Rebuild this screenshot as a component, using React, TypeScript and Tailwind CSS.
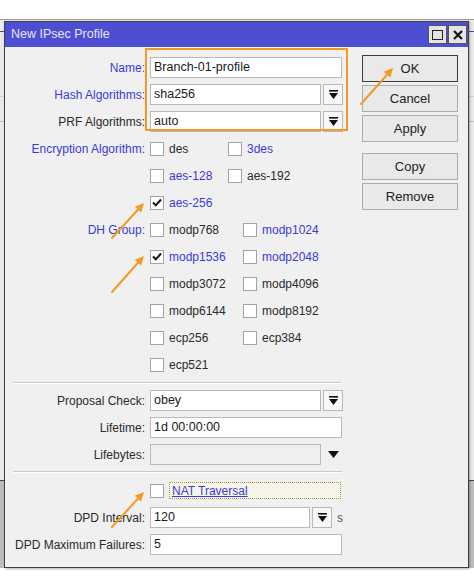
import React from "react";

const BLUE = "text-[#3a3ad8]";
const DARK = "text-[#2a2a2a]";

const DropBtn = () => (
  <div className="w-[20px] h-[21px] shrink-0 border border-[#b9b9b9] bg-[#f7f7f7] flex items-center justify-center">
    <svg width="9" height="10" viewBox="0 0 9 10">
      <rect x="0" y="0" width="9" height="1.6" fill="#111" />
      <polygon points="0,3 9,3 4.5,9" fill="#111" />
    </svg>
  </div>
);

const Field = ({ value = "", w = "w-[192px]", disabled = false }: { value?: string; w?: string; disabled?: boolean }) => (
  <div
    className={`${w} h-[21px] shrink-0 border border-[#b9b9b9] ${disabled ? "bg-[#efefef]" : "bg-white"} px-[3px] flex items-center text-[12.5px] text-[#1a1a1a]`}
  >
    {value}
  </div>
);

const Box = ({ checked = false }: { checked?: boolean }) => (
  <div className="w-[14px] h-[14px] shrink-0 border border-[#a3a3a3] bg-white flex items-center justify-center">
    {checked && (
      <svg width="10" height="9" viewBox="0 0 10 9">
        <path d="M1 4.5 L3.8 7.3 L9 1.5" stroke="#111" strokeWidth="2" fill="none" />
      </svg>
    )}
  </div>
);

const Check = ({ label, checked = false, blue = false, w }: { label: string; checked?: boolean; blue?: boolean; w: string }) => (
  <div className={`${w} flex items-center gap-[5px]`}>
    <Box checked={checked} />
    <span className={blue ? BLUE : DARK}>{label}</span>
  </div>
);

const Row = ({ label = "", blue = false, children }: { label?: string; blue?: boolean; children?: React.ReactNode }) => (
  <div className="h-[27px] flex items-center">
    <div className={`w-[141px] shrink-0 text-right pr-[1px] ${blue ? BLUE : DARK}`}>{label ? `${label}:` : ""}</div>
    <div className="ml-[4px] flex items-center gap-[2px]">{children}</div>
  </div>
);

const Sep = ({ cls }: { cls: string }) => (
  <div className={`${cls} ml-[8px] w-[329px] h-[2px] border-t border-[#cacaca] border-b border-b-white`} />
);

const Button = ({ label, primary = false }: { label: string; primary?: boolean }) => (
  <div
    className={`w-[96px] h-[27px] flex items-center justify-center bg-[#e9e9e9] text-[13px] text-[#222] border ${
      primary ? "border-[#3c3c3c]" : "border-[#adadad]"
    }`}
  >
    {label}
  </div>
);

const Arrow = ({ x1, y1, x2, y2 }: { x1: number; y1: number; x2: number; y2: number }) => {
  const a = Math.atan2(y2 - y1, x2 - x1);
  const l = 10;
  const p1 = [x2 - l * Math.cos(a - 0.45), y2 - l * Math.sin(a - 0.45)];
  const p2 = [x2 - l * Math.cos(a + 0.45), y2 - l * Math.sin(a + 0.45)];
  return (
    <g>
      <line x1={x1} y1={y1} x2={x2 - 4 * Math.cos(a)} y2={y2 - 4 * Math.sin(a)} stroke="#f29a22" strokeWidth="2" strokeLinecap="round" />
      <polygon points={`${x2},${y2} ${p1[0]},${p1[1]} ${p2[0]},${p2[1]}`} fill="#f29a22" />
    </g>
  );
};

export default function App() {
  return (
    <div
      className="relative w-[474px] h-[577px] overflow-hidden bg-white text-[12px]"
      style={{ fontFamily: '"Liberation Sans", Arial, sans-serif' }}
    >
      {/* window behind */}
      <div className="absolute left-0 top-[19px] w-[474px] h-[549px] bg-[#e9e9e9] border-t border-[#9a9a9a] flex flex-col">
        <div className="h-[12px] border-b border-[#555]" />
        <div className="h-[65px] border-b border-[#d0d0d0]" />
        <div className="h-[25px] border-b border-[#c0c0c0]" />
        <div className="flex-1" />
        <div className="h-[88px] border-t border-[#444] bg-[#bcbcbc]" />
      </div>

      {/* dialog */}
      <div className="absolute left-[4px] top-[21px] w-[465px] h-[547px] border border-[#3f3f3f] bg-[#f0f0f0] shadow-[1px_1px_2px_rgba(0,0,0,0.3)] flex flex-col">
        <div className="h-[25px] shrink-0 bg-[#4e4ed2] flex items-center justify-between pl-[6px] pr-[1px]">
          <span className="text-[#e6e6ff] text-[12.5px]">New IPsec Profile</span>
          <div className="flex gap-[1px]">
            <div className="w-[19px] h-[19px] bg-[#e4e4e4] border border-[#555] flex items-center justify-center">
              <div className="w-[11px] h-[10px] border-[1.5px] border-[#222]" />
            </div>
            <div className="w-[19px] h-[19px] bg-[#e4e4e4] border border-[#555] flex items-center justify-center">
              <svg width="10" height="10" viewBox="0 0 10 10">
                <path d="M1 1 L9 9 M9 1 L1 9" stroke="#111" strokeWidth="2.2" />
              </svg>
            </div>
          </div>
        </div>

        <div className="flex">
          <div className="w-[352px] pt-[7px]">
            <Row label="Name" blue>
              <Field value="Branch-01-profile" />
            </Row>
            <Row label="Hash Algorithms" blue>
              <Field value="sha256" w="w-[171px]" />
              <DropBtn />
            </Row>
            <Row label="PRF Algorithms">
              <Field value="auto" w="w-[171px]" />
              <DropBtn />
            </Row>
            <Row label="Encryption Algorithm" blue>
              <Check label="des" w="w-[76px]" />
              <Check label="3des" blue w="w-[80px]" />
            </Row>
            <Row>
              <Check label="aes-128" blue w="w-[76px]" />
              <Check label="aes-192" w="w-[80px]" />
            </Row>
            <Row>
              <Check label="aes-256" checked blue w="w-[76px]" />
            </Row>
            <Row label="DH Group" blue>
              <Check label="modp768" w="w-[91px]" />
              <Check label="modp1024" blue w="w-[90px]" />
            </Row>
            <Row>
              <Check label="modp1536" checked blue w="w-[91px]" />
              <Check label="modp2048" blue w="w-[90px]" />
            </Row>
            <Row>
              <Check label="modp3072" w="w-[91px]" />
              <Check label="modp4096" w="w-[90px]" />
            </Row>
            <Row>
              <Check label="modp6144" w="w-[91px]" />
              <Check label="modp8192" w="w-[90px]" />
            </Row>
            <Row>
              <Check label="ecp256" w="w-[91px]" />
              <Check label="ecp384" w="w-[90px]" />
            </Row>
            <Row>
              <Check label="ecp521" w="w-[91px]" />
            </Row>

            <Sep cls="mt-[4px] mb-[3px]" />

            <Row label="Proposal Check">
              <Field value="obey" w="w-[171px]" />
              <DropBtn />
            </Row>
            <Row label="Lifetime">
              <Field value="1d 00:00:00" />
            </Row>
            <Row label="Lifebytes">
              <Field w="w-[171px]" disabled />
              <div className="w-[20px] flex justify-center">
                <svg width="11" height="7" viewBox="0 0 11 7">
                  <polygon points="0,0 11,0 5.5,7" fill="#111" />
                </svg>
              </div>
            </Row>

            <Sep cls="mt-[3px] mb-[4px]" />

            <Row>
              <Box />
              <div className="ml-[3px] w-[172px] h-[17px] border border-dotted border-[#a09a3a] bg-[#f5f5ea] flex items-center pl-[2px]">
                <span className={`${BLUE} underline`}>NAT Traversal</span>
              </div>
            </Row>
            <Row label="DPD Interval">
              <Field value="120" w="w-[160px]" />
              <DropBtn />
              <span className="ml-[3px] text-[#555] text-[12px]">s</span>
            </Row>
            <Row label="DPD Maximum Failures">
              <Field value="5" />
            </Row>
          </div>

          <div className="ml-[5px] pt-[8px] flex flex-col gap-[3px]">
            <Button label="OK" primary />
            <Button label="Cancel" />
            <Button label="Apply" />
            <div className="h-[5px]" />
            <Button label="Copy" />
            <Button label="Remove" />
          </div>
        </div>

        {/* highlight box */}
        <div className="absolute left-[140px] top-[26px] w-[203px] h-[83px] border-2 border-[#f29a22] pointer-events-none" />
      </div>

      <svg className="absolute left-0 top-0 pointer-events-none" width="474" height="577">
        <Arrow x1={361} y1={104} x2={393} y2={68} />
        <Arrow x1={112} y1={238} x2={144} y2={203} />
        <Arrow x1={112} y1={292} x2={144} y2={256} />
        <Arrow x1={112} y1={527} x2={144} y2={492} />
      </svg>
    </div>
  );
}
